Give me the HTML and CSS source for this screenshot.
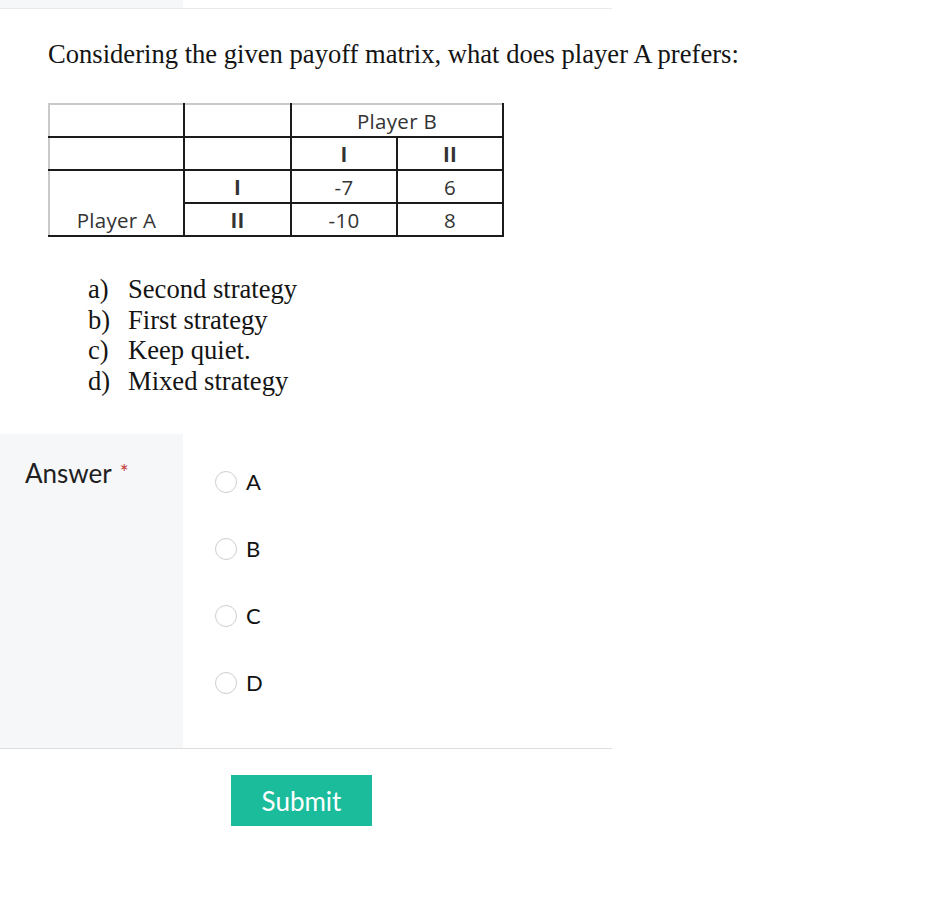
FILE: index.html
```html
<!DOCTYPE html>
<html>
<head>
<meta charset="utf-8">
<link rel="stylesheet" href="styles.css">
</head>
<body>
<div class="form">
  <div class="row prev-row">
    <div class="label-col"></div>
    <div class="field-col"></div>
  </div>

  <div class="question">
    <p class="q-text">Considering the given payoff matrix, what does player A prefers:</p>
    <table class="matrix">
      <tr>
        <td class="c1 first-row"></td>
        <td class="c2"></td>
        <td class="c34" colspan="2">Player B</td>
      </tr>
      <tr>
        <td class="c1"></td>
        <td class="c2"></td>
        <td class="c3 bold">I</td>
        <td class="c4 bold">II</td>
      </tr>
      <tr>
        <td class="c1 player-a" rowspan="2">Player A</td>
        <td class="c2 bold">I</td>
        <td class="c3">-7</td>
        <td class="c4">6</td>
      </tr>
      <tr>
        <td class="c2 bold">II</td>
        <td class="c3">-10</td>
        <td class="c4">8</td>
      </tr>
    </table>
    <ol class="choices">
      <li><span class="mark">a)</span>Second strategy</li>
      <li><span class="mark">b)</span>First strategy</li>
      <li><span class="mark">c)</span>Keep quiet.</li>
      <li><span class="mark">d)</span>Mixed strategy</li>
    </ol>
  </div>

  <div class="row answer-row">
    <div class="label-col">
      <span class="answer-label">Answer</span><span class="req">*</span>
    </div>
    <div class="field-col">
      <ul class="radios">
        <li><span class="radio"></span><span class="opt">A</span></li>
        <li><span class="radio"></span><span class="opt">B</span></li>
        <li><span class="radio"></span><span class="opt">C</span></li>
        <li><span class="radio"></span><span class="opt">D</span></li>
      </ul>
    </div>
  </div>

  <div class="actions">
    <button class="submit" type="button">Submit</button>
  </div>
</div>
</body>
</html>
```

FILE: styles.css
```css
html, body {
  margin: 0;
  padding: 0;
  background: #ffffff;
}

body {
  font-family: Lato, "Open Sans", sans-serif;
  color: #1f1f1f;
}

.form {
  width: 612px;
}

.row {
  display: grid;
  grid-template-columns: 183px 1fr;
}

.label-col {
  background: #f6f7f9;
}

.prev-row {
  height: 8px;
  border-bottom: 1px solid #e9e9e9;
}

.question {
  padding: 31px 0 0 48px;
  width: 760px;
}

.q-text {
  margin: 0;
  font-family: "Liberation Serif", "Times New Roman", serif;
  font-size: 26.6px;
  line-height: 28px;
  color: #141414;
  white-space: nowrap;
}

.matrix {
  margin-top: 35px;
  border-collapse: collapse;
  font-family: "Open Sans", sans-serif;
  font-size: 20.5px;
  letter-spacing: 0.3px;
  color: #333;
}

.matrix td {
  height: 31px;
  padding: 0;
  line-height: 24px;
  text-align: center;
  vertical-align: middle;
  border: 2px solid #1b1b1b;
}

.matrix tr:first-child td {
  border-top: 2px solid #c9c9c9;
}

.matrix td.c1 {
  border-left: 2px solid #c9c9c9;
  width: 133px;
}

.matrix td.c2 { width: 105px; }
.matrix td.c3 { width: 104px; }
.matrix td.c4 { width: 104px; }

.matrix td.player-a {
  vertical-align: bottom;
  padding-bottom: 3px;
}

.matrix td.bold {
  font-weight: 700;
}

.choices {
  list-style: none;
  margin: 37px 0 0 40px;
  padding: 0;
  font-family: "Liberation Serif", "Times New Roman", serif;
  font-size: 26.6px;
  line-height: 30.5px;
  color: #141414;
}

.choices li {
  display: flex;
}

.mark {
  width: 40px;
}

.answer-row {
  margin-top: 38px;
  height: 314px;
  border-bottom: 1px solid #dedede;
}

.answer-row .label-col {
  padding: 24px 0 0 25px;
}

.answer-label {
  font-size: 26px;
  line-height: 30px;
  color: #1f1f1f;
}

.req {
  color: #c43b3b;
  font-size: 21px;
  vertical-align: top;
  margin-left: 8px;
  position: relative;
  top: 1px;
}

.radios {
  list-style: none;
  margin: 0;
  padding: 14px 0 0 32px;
}

.radios li {
  height: 67px;
  display: flex;
  align-items: center;
}

.radio {
  width: 22px;
  height: 22px;
  border: 1px solid #cfcfcf;
  border-radius: 50%;
  box-sizing: border-box;
  background: #fff;
}

.opt {
  margin-left: 9px;
  font-size: 22px;
  color: #111;
}

.actions {
  padding: 26px 0 0 231px;
}

.submit {
  width: 141px;
  height: 51px;
  border: 0;
  border-radius: 0;
  background: #1abc9c;
  color: #ffffff;
  font-family: Lato, "Open Sans", sans-serif;
  font-size: 26px;
  padding: 0;
  cursor: pointer;
}
```
